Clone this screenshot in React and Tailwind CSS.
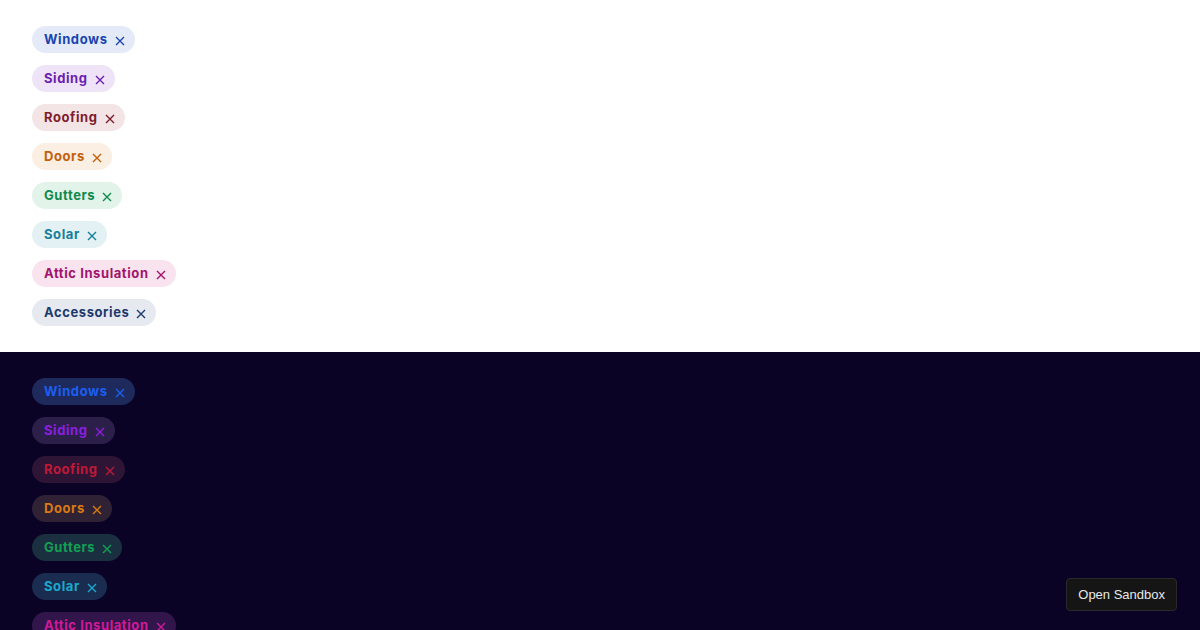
import React from "react";

const tags = [
  { name: "Windows", light: "bg-[#e4eaf7] text-[#1a45b0]", dark: "bg-[#1f2a5c] text-[#1a5ff0]" },
  { name: "Siding", light: "bg-[#efe4f7] text-[#6b1fb0]", dark: "bg-[#2c1f4a] text-[#8b1fe0]" },
  { name: "Roofing", light: "bg-[#f3e4e6] text-[#7f1d2d]", dark: "bg-[#2e1535] text-[#c01838]" },
  { name: "Doors", light: "bg-[#fbeee3] text-[#c2610c]", dark: "bg-[#2f2235] text-[#d97a12]" },
  { name: "Gutters", light: "bg-[#e2f3ea] text-[#0f8a4a]", dark: "bg-[#1a2f40] text-[#13a053]" },
  { name: "Solar", light: "bg-[#e3f1f4] text-[#177f99]", dark: "bg-[#1a2d50] text-[#1aa8cc]" },
  { name: "Attic Insulation", light: "bg-[#f8e3ef] text-[#a3136b]", dark: "bg-[#32154a] text-[#d01a9a]" },
  { name: "Accessories", light: "bg-[#e6eaf0] text-[#1e3a6b]", dark: "bg-[#1c2546] text-[#3b6bd0]" },
];

function X() {
  return (
    <svg width="10" height="10" viewBox="0 0 10 10" fill="none" className="mt-[2px]">
      <path d="M1 1L9 9M9 1L1 9" stroke="currentColor" strokeWidth="1.4" />
    </svg>
  );
}

function Chip({ name, cls }) {
  return (
    <div className={`inline-flex h-[27px] items-center gap-[7px] self-start rounded-full pl-[12px] pr-[10px] text-[13px] font-bold tracking-[0.045em] ${cls}`}>
      <span className="leading-none mt-[-1px]">{name}</span>
      <X />
    </div>
  );
}

function Section({ dark }) {
  return (
    <div className={`flex flex-col gap-[12px] px-[32px] py-[26px] ${dark ? "bg-[#0a0326]" : "bg-white"}`}>
      {tags.map((t) => (
        <Chip key={t.name} name={t.name} cls={dark ? t.dark : t.light} />
      ))}
    </div>
  );
}

export default function App() {
  return (
    <div className="relative h-[630px] w-[1200px] overflow-hidden font-['Inter',sans-serif]">
      <Section dark={false} />
      <Section dark={true} />
      <button className="absolute bottom-[19px] right-[23px] h-[33px] rounded-[4px] border border-[#2a2a2a] bg-[#151515] px-[11px] text-[13px] text-[#e8e8e8] font-['Liberation_Sans',Arial,sans-serif]">
        Open Sandbox
      </button>
    </div>
  );
}
